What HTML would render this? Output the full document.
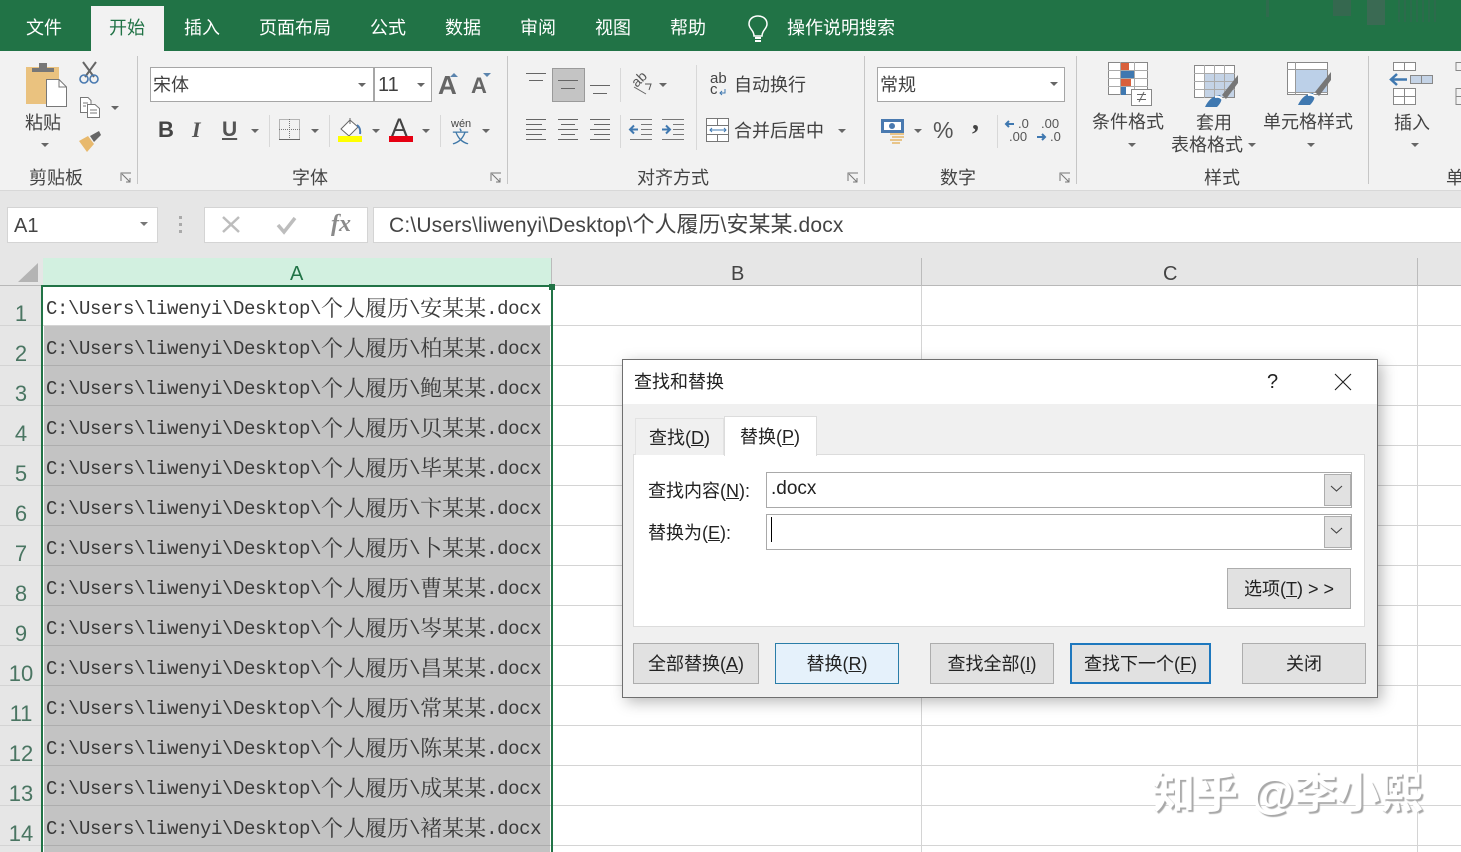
<!DOCTYPE html>
<html lang="zh-CN"><head><meta charset="utf-8"><title>Excel 查找和替换</title>
<style>
html,body{margin:0;padding:0;background:#fff}
#p{position:relative;width:1461px;height:852px;overflow:hidden;background:#fff;font-family:"Liberation Sans","Noto Sans CJK SC",sans-serif;color:#333}
#p div,#p span.t{position:absolute;white-space:nowrap;box-sizing:border-box}
.t{font-size:18px;line-height:24px;color:#404040;margin-top:1px}
.tab{color:#fff;top:15px}
.g{color:#444}
.ln{background:#d4d4d4}
.sep{background:#c6c6c6;width:1px}
.arr{width:0;height:0;border-left:4px solid transparent;border-right:4px solid transparent;border-top:4px solid #666}
.rn{left:0;width:42px;text-align:center;font-size:22px;line-height:26px;color:#4a7562;margin-top:1px}
.c{left:46px;height:26px;line-height:26px;font-family:"Liberation Mono",monospace;font-size:19px;letter-spacing:-.4px;color:#3a3a3a;margin-top:-2px}
.c b{font-family:"Noto Serif CJK SC","Noto Sans CJK SC",serif;font-weight:400;font-size:22px;letter-spacing:0;position:relative;top:2px}
.btn{background:#e1e1e1;border:1px solid #adadad;text-align:center;font-size:18px;line-height:40px;color:#222;height:41px;top:643px}
.d{font-size:18px;line-height:24px;color:#222}
.in{left:766px;width:586px;height:36px;background:#fff;border:1px solid #a9a9a9}
.dd{left:1324px;width:27px;height:32px;background:#e1e1e1;border:1px solid #adadad}
.fz{font-size:22px;letter-spacing:0}
</style></head><body><div id="p">

<!-- title bar -->
<div style="left:0;top:0;width:1461px;height:51px;background:#217346"></div>
<div style="left:1266px;top:0;width:3px;height:17px;background:#2f6b4d"></div>
<div style="left:1333px;top:0;width:18px;height:16px;background:#35684f"></div>
<div style="left:1367px;top:0;width:18px;height:25px;background:#3a6a53"></div>
<div style="left:1398px;top:0;width:40px;height:22px;background:repeating-linear-gradient(90deg,#2c6b4c 0 2px,#217346 2px 6px)"></div>
<div style="left:91px;top:6px;width:73px;height:46px;background:#f2f2f2"></div>
<span class="t tab" style="left:26px">文件</span>
<span class="t" style="left:109px;top:15px;color:#217346">开始</span>
<span class="t tab" style="left:184px">插入</span>
<span class="t tab" style="left:259px">页面布局</span>
<span class="t tab" style="left:370px">公式</span>
<span class="t tab" style="left:445px">数据</span>
<span class="t tab" style="left:520px">审阅</span>
<span class="t tab" style="left:595px">视图</span>
<span class="t tab" style="left:670px">帮助</span>
<span class="t tab" style="left:787px">操作说明搜索</span>

<!-- ribbon -->
<div style="left:0;top:51px;width:1461px;height:139px;background:#f2f2f2"></div>
<div style="left:0;top:190px;width:1461px;height:68px;background:#e6e6e6;border-top:1px solid #d8d8d8"></div>
<div class="sep" style="left:137px;top:56px;height:128px"></div>
<div class="sep" style="left:507px;top:56px;height:128px"></div>
<div class="sep" style="left:864px;top:56px;height:128px"></div>
<div class="sep" style="left:1076px;top:56px;height:128px"></div>
<div class="sep" style="left:1368px;top:56px;height:128px"></div>
<div class="sep" style="left:269px;top:115px;height:32px;background:#d8d8d8"></div>
<div class="sep" style="left:329px;top:115px;height:32px;background:#d8d8d8"></div>
<div class="sep" style="left:440px;top:115px;height:32px;background:#d8d8d8"></div>
<div class="sep" style="left:620px;top:68px;height:34px;background:#d8d8d8"></div>
<div class="sep" style="left:620px;top:115px;height:33px;background:#d8d8d8"></div>
<div class="sep" style="left:696px;top:65px;height:85px;background:#d8d8d8"></div>
<div class="sep" style="left:997px;top:115px;height:33px;background:#d8d8d8"></div>

<!-- ribbon icons -->
<svg style="position:absolute;left:0;top:0" width="1461" height="192" fill="none">
<!-- paste -->
<rect x="26" y="67" width="33" height="37" fill="#eac27f"/>
<path d="M32 72V68H39V63H47V68H54V72Z" fill="#777"/>
<path d="M46.500 79.500H59L66.500 87V106.500H46.500Z" fill="#fff" stroke="#777"/>
<path d="M59 79.500V87H66.500" stroke="#777"/>
<!-- scissors -->
<path d="M83 62L94 77M96 62L85 77" stroke="#666" stroke-width="2"/>
<circle cx="84" cy="79" r="4" stroke="#4a7ab0" stroke-width="1.600"/><circle cx="94" cy="79" r="4" stroke="#4a7ab0" stroke-width="1.600"/>
<!-- copy -->
<path d="M80.500 97.500H88L91 100.500V112.500H80.500Z" fill="#fff" stroke="#777"/>
<path d="M87.500 104.500H95L99.500 108.500V117.500H87.500Z" fill="#fff" stroke="#777"/>
<path d="M83 103H88M83 106H86M90 110H97M90 113H97" stroke="#777"/>
<!-- brush -->
<path d="M79 141L88 136L94 144L87 152Z" fill="#e8b96d"/>
<path d="M90 136L99 131L101 135L94 142Z" fill="#666"/>
<!-- font grow/shrink arrows -->
<path d="M450 77L454 73L458 77Z" fill="#5b84ad"/><path d="M483 73H491L487 77Z" fill="#5b84ad"/>
<!-- borders -->
<rect x="279.500" y="119.500" width="20" height="20" stroke="#777" stroke-dasharray="1 1"/>
<path d="M289.500 119V140M279 129.500H300" stroke="#777" stroke-dasharray="1 1"/>
<path d="M279 139.500H300" stroke="#666"/>
<!-- fill colour -->
<path d="M350 120L341 129L349 136L358 127Z" fill="#fff" stroke="#666"/>
<path d="M350 118V124" stroke="#666"/>
<path d="M357 125Q361 128 360 134" stroke="#4a7ab0" stroke-width="2"/>
<rect x="338" y="136" width="24" height="6" fill="#ffff00"/>
<rect x="389" y="136" width="24" height="6" fill="#e60012"/>
<!-- align row 1 -->
<rect x="552.500" y="68.500" width="32" height="33" fill="#c4c4c4" stroke="#9a9a9a"/>
<path d="M526 73.500H546M529 80.500H543M558 80.500H578M561 88.500H575M590 85.500H610M593 93.500H607" stroke="#666"/>
<!-- orientation -->
<path d="M634 87L646 94" stroke="#666"/>
<path d="M645 84L651 84L649 90" stroke="#555"/>
<!-- align row 2 -->
<path d="M526 119.500H546M526 124.500H542M526 129.500H546M526 134.500H542M526 139.500H546" stroke="#666"/>
<path d="M558 119.500H578M561 124.500H575M558 129.500H578M561 134.500H575M558 139.500H578" stroke="#666"/>
<path d="M590 119.500H610M594 124.500H610M590 129.500H610M594 134.500H610M590 139.500H610" stroke="#666"/>
<path d="M630 119.500H652M641 124.500H652M641 129.500H652M641 134.500H652M630 139.500H652" stroke="#777"/>
<path d="M638 129.500H630M634 125.500L630 129.500L634 133.500" stroke="#3f78b0" stroke-width="2"/>
<path d="M662 119.500H684M673 124.500H684M673 129.500H684M673 134.500H684M662 139.500H684" stroke="#777"/>
<path d="M662 129.500H670M666 125.500L670 129.500L666 133.500" stroke="#3f78b0" stroke-width="2"/>
<!-- wrap arrow -->
<path d="M725 89V93H720M722 91L720 93L722 95" stroke="#3f78b0"/>
<!-- merge -->
<rect x="706.500" y="118.500" width="22" height="23" fill="#fff" stroke="#777"/>
<path d="M707 125.500H729M707 134.500H729M717.500 118V125M717.500 135V141" stroke="#777"/>
<path d="M710 130H726M712 128L710 130L712 132M724 128L726 130L724 132" stroke="#3f78b0"/>
<!-- currency -->
<rect x="881" y="119" width="23" height="14" fill="#4a7ab0"/>
<rect x="884" y="122" width="17" height="8" fill="#fff"/>
<circle cx="892" cy="126" r="3" fill="#4a7ab0"/>
<path d="M890 134H904M892 137H904M890 140H902M892 143H900" stroke="#e8c58a" stroke-width="2"/>
<!-- decimals arrows -->
<path d="M1014 124H1006M1009 121L1006 124L1009 127" stroke="#3f78b0" stroke-width="2"/>
<path d="M1037 137H1045M1042 134L1045 137L1042 140" stroke="#3f78b0" stroke-width="2"/>
<!-- cond format -->
<rect x="1108.500" y="62.500" width="39" height="32" fill="#fff" stroke="#888"/>
<path d="M1108 70.500H1148M1108 78.500H1148M1108 86.500H1148M1120.500 62V95M1134.500 62V95" stroke="#aaa"/>
<rect x="1121" y="63" width="8" height="7" fill="#d9603b"/><rect x="1121" y="71" width="13" height="7" fill="#3f78b0"/>
<rect x="1121" y="79" width="10" height="7" fill="#d9603b"/><rect x="1121" y="87" width="5" height="8" fill="#3f78b0"/>
<rect x="1131.500" y="89.500" width="20" height="16" fill="#fff" stroke="#888"/>
<path d="M1137 94.500H1146M1137 99.500H1146M1144 92L1139 102" stroke="#666"/>
<!-- table format -->
<rect x="1194.500" y="65.500" width="40" height="32" fill="#fff" stroke="#888"/>
<rect x="1204" y="73" width="30" height="24" fill="#c4d3e6"/>
<path d="M1194 73.500H1235M1194 81.500H1235M1194 89.500H1235M1204.500 65V98M1214.500 65V98M1224.500 65V98" stroke="#aaa"/>
<path d="M1222 95L1238 75V83L1226 99Z" fill="#777"/>
<path d="M1205 107Q1210 96 1220 95Q1224 100 1217 107Z" fill="#3f78b0"/>
<path d="M1215 97Q1220 96 1222 99" stroke="#fff" stroke-width="2"/>
<!-- cell style -->
<rect x="1287.500" y="62.500" width="40" height="32" fill="#fff" stroke="#888"/>
<rect x="1295" y="70" width="32" height="22" fill="#bcd0e8"/>
<path d="M1287 69.500H1328M1287 92.500H1328M1295.500 62V95" stroke="#999"/>
<path d="M1315 92L1331 72V80L1319 96Z" fill="#777"/>
<path d="M1298 105Q1303 94 1313 93Q1317 98 1310 105Z" fill="#3f78b0"/>
<path d="M1308 95Q1313 94 1315 97" stroke="#fff" stroke-width="2"/>
<!-- insert -->
<rect x="1393.500" y="62.500" width="22" height="8" fill="#fff" stroke="#888"/>
<path d="M1404.500 62V71" stroke="#888"/>
<rect x="1410.500" y="75.500" width="22" height="8" fill="#c4d3e6" stroke="#888"/>
<path d="M1421.500 75V84" stroke="#888"/>
<path d="M1407 79.500H1392M1397 74L1391 79.500L1397 85" stroke="#3f78b0" stroke-width="2.500"/>
<rect x="1393.500" y="88.500" width="22" height="16" fill="#fff" stroke="#888"/>
<path d="M1404.500 88V105M1393 96.500H1416" stroke="#888"/>
<path d="M1461 62.500H1456V70.500H1461M1461 88.500H1456V104.500H1461M1456 96.500H1461" stroke="#888"/>
<!-- launchers -->
<g stroke="#777"><path d="M121 181V173H131M122 174L130 182M130 178V182H126"/><path d="M491 181V173H501M492 174L500 182M500 178V182H496"/><path d="M848 181V173H858M849 174L857 182M857 178V182H853"/><path d="M1060 181V173H1070M1061 174L1069 182M1069 178V182H1065"/></g>
<!-- lightbulb -->
<path d="M754 36C754 30 749 29 749 24C749 19 753 16 758 16C763 16 767 19 767 24C767 29 762 30 762 36Z" stroke="#fff" stroke-width="1.500"/>
<path d="M755 38H761M755 41H761" stroke="#fff" stroke-width="2"/>
</svg>

<span class="t g" style="left:25px;top:110px">粘贴</span>
<div class="arr" style="left:41px;top:143px"></div>
<div class="arr" style="left:111px;top:106px"></div>
<span class="t g" style="left:29px;top:165px">剪贴板</span>
<span class="t g" style="left:292px;top:165px">字体</span>
<span class="t g" style="left:637px;top:165px">对齐方式</span>
<span class="t g" style="left:940px;top:165px">数字</span>
<span class="t g" style="left:1204px;top:165px">样式</span>
<span class="t g" style="left:1446px;top:165px">单</span>

<!-- font boxes -->
<div style="left:150px;top:67px;width:224px;height:35px;background:#fff;border:1px solid #a6a6a6"></div>
<div style="left:374px;top:67px;width:58px;height:35px;background:#fff;border:1px solid #a6a6a6"></div>
<span class="t" style="left:153px;top:72px">宋体</span>
<span class="t" style="left:378px;top:72px;font-size:20px">11</span>
<div class="arr" style="left:358px;top:83px"></div>
<div class="arr" style="left:417px;top:83px"></div>
<span class="t" style="left:438px;top:72px;font-size:26px;font-weight:700;color:#666">A</span>
<span class="t" style="left:471px;top:73px;font-size:22px;font-weight:700;color:#666">A</span>
<span class="t" style="left:158px;top:117px;font-size:22px;font-weight:700;color:#444">B</span>
<span class="t" style="left:192px;top:117px;font-size:22px;font-weight:700;font-style:italic;font-family:'Liberation Serif',serif;color:#555">I</span>
<span class="t" style="left:222px;top:117px;font-size:21px;font-weight:700;color:#555;text-decoration:underline">U</span>
<div class="arr" style="left:251px;top:129px"></div>
<div class="arr" style="left:311px;top:129px"></div>
<div class="arr" style="left:372px;top:129px"></div>
<div class="arr" style="left:422px;top:129px"></div>
<div class="arr" style="left:482px;top:129px"></div>
<span class="t" style="left:391px;top:115px;font-size:25px;color:#444">A</span>
<span class="t" style="left:451px;top:116px;font-size:11px;line-height:14px;color:#444">wén</span>
<span class="t" style="left:452px;top:128px;font-size:17px;line-height:18px;color:#3f78a8">文</span>

<!-- align text -->
<span class="t" style="left:631px;top:70px;font-size:14px;line-height:16px;color:#555;transform:rotate(-45deg)">ab</span>
<span class="t" style="left:710px;top:70px;font-size:15px;line-height:16px;color:#444">ab</span>
<span class="t" style="left:710px;top:82px;font-size:15px;line-height:14px;color:#444">c</span>
<span class="t" style="left:734px;top:72px">自动换行</span>
<span class="t" style="left:734px;top:118px">合并后居中</span>
<div class="arr" style="left:838px;top:129px"></div>
<div class="arr" style="left:659px;top:83px"></div>

<!-- number -->
<div style="left:877px;top:67px;width:188px;height:35px;background:#fff;border:1px solid #a6a6a6"></div>
<span class="t" style="left:880px;top:72px">常规</span>
<div class="arr" style="left:1050px;top:82px"></div>
<div class="arr" style="left:914px;top:129px"></div>
<span class="t" style="left:933px;top:117px;font-size:23px;color:#555">%</span>
<span class="t" style="left:972px;top:108px;font-size:28px;font-weight:700;font-family:'Liberation Serif',serif;color:#444">,</span>
<span class="t" style="left:1018px;top:116px;font-size:13px;line-height:13px;color:#555">.0</span>
<span class="t" style="left:1009px;top:129px;font-size:13px;line-height:13px;color:#555">.00</span>
<span class="t" style="left:1041px;top:116px;font-size:13px;line-height:13px;color:#555">.00</span>
<span class="t" style="left:1050px;top:129px;font-size:13px;line-height:13px;color:#555">.0</span>

<!-- styles text -->
<span class="t g" style="left:1092px;top:109px">条件格式</span>
<div class="arr" style="left:1128px;top:143px"></div>
<span class="t g" style="left:1196px;top:110px">套用</span>
<span class="t g" style="left:1171px;top:132px">表格格式</span>
<div class="arr" style="left:1248px;top:143px"></div>
<span class="t g" style="left:1263px;top:109px">单元格样式</span>
<div class="arr" style="left:1307px;top:143px"></div>
<span class="t g" style="left:1394px;top:110px">插入</span>
<div class="arr" style="left:1411px;top:143px"></div>

<!-- formula bar -->
<div style="left:7px;top:207px;width:151px;height:36px;background:#fff;border:1px solid #d4d4d4"></div>
<span class="t" style="left:14px;top:213px;font-size:20px;color:#444">A1</span>
<div class="arr" style="left:140px;top:222px;border-top-color:#777"></div>
<div style="left:179px;top:216px;width:3px;height:3px;background:#aaa"></div>
<div style="left:179px;top:223px;width:3px;height:3px;background:#aaa"></div>
<div style="left:179px;top:230px;width:3px;height:3px;background:#aaa"></div>
<div style="left:204px;top:207px;width:164px;height:36px;background:#fff;border:1px solid #d4d4d4"></div>
<div style="left:373px;top:207px;width:1090px;height:36px;background:#fff;border:1px solid #d4d4d4"></div>
<svg style="position:absolute;left:204px;top:207px" width="164" height="36" fill="none">
<path d="M19 10L35 25M35 10L19 25" stroke="#bdbdbd" stroke-width="2.500"/>
<path d="M74 18L80 25L91 11" stroke="#bdbdbd" stroke-width="3.500"/>
</svg>
<span class="t" style="left:331px;top:211px;font-size:24px;font-family:'Liberation Serif',serif;font-style:italic;font-weight:700;color:#8a8a8a">fx</span>
<span class="t" style="left:389px;top:212px;font-size:21px;color:#444;letter-spacing:.17px">C:\Users\liwenyi\Desktop\<span class="fz">个人履历</span>\<span class="fz">安某某</span>.docx</span>

<!-- headers -->
<div style="left:0;top:258px;width:1461px;height:28px;background:#e6e6e6;border-bottom:1px solid #b8b8b8"></div>
<div style="left:0;top:286px;width:42px;height:566px;background:#e6e6e6"></div>
<svg style="position:absolute;left:0;top:258px" width="44" height="28"><path d="M18 24L38 5V24Z" fill="#b4b4b4"/></svg>
<div style="left:43px;top:258px;width:508px;height:27px;background:#d2f0e0"></div>
<span class="t" style="left:290px;top:261px;font-size:20px;color:#217346">A</span>
<span class="t" style="left:731px;top:261px;font-size:20px;color:#444">B</span>
<span class="t" style="left:1163px;top:261px;font-size:20px;color:#444">C</span>
<div class="ln" style="left:921px;top:258px;width:1px;height:28px;background:#bbb"></div>
<div class="ln" style="left:1417px;top:258px;width:1px;height:28px;background:#bbb"></div>
<div class="ln" style="left:551px;top:258px;width:1px;height:28px;background:#bbb"></div>

<!-- grid -->
<div class="ln" style="left:921px;top:286px;width:1px;height:566px"></div>
<div class="ln" style="left:1417px;top:286px;width:1px;height:566px"></div>
<div class="ln" style="left:0;top:325px;width:1461px;height:1px"></div>
<div class="ln" style="left:0;top:365px;width:1461px;height:1px"></div>
<div class="ln" style="left:0;top:405px;width:1461px;height:1px"></div>
<div class="ln" style="left:0;top:445px;width:1461px;height:1px"></div>
<div class="ln" style="left:0;top:485px;width:1461px;height:1px"></div>
<div class="ln" style="left:0;top:525px;width:1461px;height:1px"></div>
<div class="ln" style="left:0;top:565px;width:1461px;height:1px"></div>
<div class="ln" style="left:0;top:605px;width:1461px;height:1px"></div>
<div class="ln" style="left:0;top:645px;width:1461px;height:1px"></div>
<div class="ln" style="left:0;top:685px;width:1461px;height:1px"></div>
<div class="ln" style="left:0;top:725px;width:1461px;height:1px"></div>
<div class="ln" style="left:0;top:765px;width:1461px;height:1px"></div>
<div class="ln" style="left:0;top:805px;width:1461px;height:1px"></div>
<div class="ln" style="left:0;top:845px;width:1461px;height:1px"></div>

<!-- selected fill -->
<div style="left:44px;top:326px;width:506px;height:526px;background:repeating-linear-gradient(180deg,#c3c3c3 0 39px,#adadad 39px 40px)"></div>
<div style="left:41px;top:285px;width:2px;height:567px;background:#217346"></div>
<div style="left:551px;top:285px;width:2px;height:567px;background:#217346"></div>
<div style="left:41px;top:285px;width:512px;height:2px;background:#217346"></div>
<div style="left:549px;top:284px;width:6px;height:6px;background:#217346"></div>

<!-- row numbers -->
<div class="rn" style="top:300px">1</div>
<div class="rn" style="top:340px">2</div>
<div class="rn" style="top:380px">3</div>
<div class="rn" style="top:420px">4</div>
<div class="rn" style="top:460px">5</div>
<div class="rn" style="top:500px">6</div>
<div class="rn" style="top:540px">7</div>
<div class="rn" style="top:580px">8</div>
<div class="rn" style="top:620px">9</div>
<div class="rn" style="top:660px">10</div>
<div class="rn" style="top:700px">11</div>
<div class="rn" style="top:740px">12</div>
<div class="rn" style="top:780px">13</div>
<div class="rn" style="top:820px">14</div>

<!-- cells -->
<div class="c" style="top:295px">C:\Users\liwenyi\Desktop\<b>个人履历</b>\<b>安某某</b>.docx</div>
<div class="c" style="top:335px">C:\Users\liwenyi\Desktop\<b>个人履历</b>\<b>柏某某</b>.docx</div>
<div class="c" style="top:375px">C:\Users\liwenyi\Desktop\<b>个人履历</b>\<b>鲍某某</b>.docx</div>
<div class="c" style="top:415px">C:\Users\liwenyi\Desktop\<b>个人履历</b>\<b>贝某某</b>.docx</div>
<div class="c" style="top:455px">C:\Users\liwenyi\Desktop\<b>个人履历</b>\<b>毕某某</b>.docx</div>
<div class="c" style="top:495px">C:\Users\liwenyi\Desktop\<b>个人履历</b>\<b>卞某某</b>.docx</div>
<div class="c" style="top:535px">C:\Users\liwenyi\Desktop\<b>个人履历</b>\<b>卜某某</b>.docx</div>
<div class="c" style="top:575px">C:\Users\liwenyi\Desktop\<b>个人履历</b>\<b>曹某某</b>.docx</div>
<div class="c" style="top:615px">C:\Users\liwenyi\Desktop\<b>个人履历</b>\<b>岑某某</b>.docx</div>
<div class="c" style="top:655px">C:\Users\liwenyi\Desktop\<b>个人履历</b>\<b>昌某某</b>.docx</div>
<div class="c" style="top:695px">C:\Users\liwenyi\Desktop\<b>个人履历</b>\<b>常某某</b>.docx</div>
<div class="c" style="top:735px">C:\Users\liwenyi\Desktop\<b>个人履历</b>\<b>陈某某</b>.docx</div>
<div class="c" style="top:775px">C:\Users\liwenyi\Desktop\<b>个人履历</b>\<b>成某某</b>.docx</div>
<div class="c" style="top:815px">C:\Users\liwenyi\Desktop\<b>个人履历</b>\<b>褚某某</b>.docx</div>

<!-- watermark -->
<span class="t" style="left:1152px;top:768px;font-size:43px;line-height:50px;color:#fff;font-weight:700;word-spacing:2px;text-shadow:2px 2px 1px #a8a8a8">知乎 @李小熙</span>

<!-- dialog -->
<div style="left:622px;top:359px;width:756px;height:339px;background:#f0f0f0;border:1px solid #6f6f6f;box-shadow:4px 4px 14px rgba(0,0,0,.28)"></div>
<div style="left:623px;top:360px;width:754px;height:44px;background:#fff"></div>
<span class="t d" style="left:634px;top:369px">查找和替换</span>
<span class="t d" style="left:1267px;top:369px;font-size:20px">?</span>
<svg style="position:absolute;left:1334px;top:373px" width="18" height="18"><path d="M1 1L17 17M17 1L1 17" stroke="#222" stroke-width="1.100"/></svg>

<div style="left:633px;top:454px;width:732px;height:173px;background:#fff;border:1px solid #dcdcdc"></div>
<div style="left:635px;top:418px;width:89px;height:37px;background:#f0f0f0;border:1px solid #e2e2e2;border-bottom:0"></div>
<div style="left:724px;top:416px;width:93px;height:40px;background:#fff;border:1px solid #dcdcdc;border-bottom:0"></div>
<span class="t d" style="left:649px;top:425px">查找(<u>D</u>)</span>
<span class="t d" style="left:740px;top:424px">替换(<u>P</u>)</span>

<span class="t d" style="left:648px;top:478px">查找内容(<u>N</u>):</span>
<span class="t d" style="left:648px;top:520px">替换为(<u>E</u>):</span>
<div class="in" style="top:472px"></div>
<div class="in" style="top:514px"></div>
<span class="t d" style="left:771px;top:476px;font-size:19px">.docx</span>
<div style="left:771px;top:517px;width:1px;height:25px;background:#000"></div>
<div class="dd" style="top:474px"></div>
<div class="dd" style="top:516px"></div>
<svg style="position:absolute;left:1330px;top:485px" width="16" height="60" fill="none"><path d="M1 1L6.500 6L12 1M1 43L6.500 48L12 43" stroke="#444" stroke-width="1.100"/></svg>

<div class="btn" style="left:1227px;top:568px;width:124px">选项(<u>T</u>) &gt; &gt;</div>
<div class="btn" style="left:633px;width:126px">全部替换(<u>A</u>)</div>
<div class="btn" style="left:775px;width:124px;background:#e5f1fb;border-color:#2a7da8">替换(<u>R</u>)</div>
<div class="btn" style="left:930px;width:124px">查找全部(<u>I</u>)</div>
<div class="btn" style="left:1070px;width:141px;border:2px solid #1e78be;line-height:39px">查找下一个(<u>F</u>)</div>
<div class="btn" style="left:1242px;width:124px">关闭</div>

</div></body></html>
